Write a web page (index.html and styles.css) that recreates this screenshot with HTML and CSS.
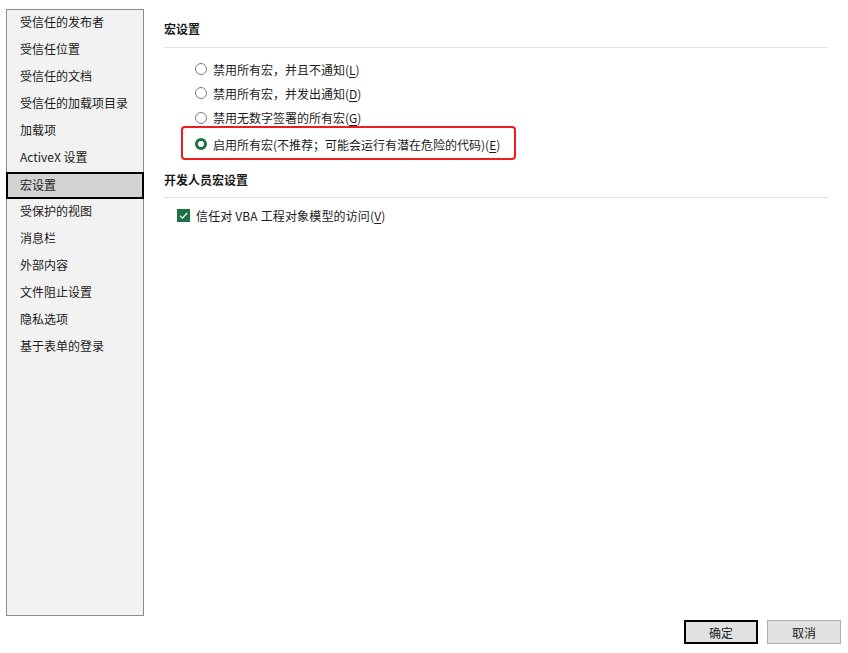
FILE: index.html
```html
<!DOCTYPE html>
<html lang="zh-CN">
<head>
<meta charset="utf-8">
<title>信任中心</title>
<link rel="stylesheet" href="styles.css">
</head>
<body>
<div class="dialog">
  <div class="top">
    <ul class="sidebar">
      <li class="nav-item">受信任的发布者</li>
      <li class="nav-item">受信任位置</li>
      <li class="nav-item">受信任的文档</li>
      <li class="nav-item">受信任的加载项目录</li>
      <li class="nav-item">加载项</li>
      <li class="nav-item">ActiveX 设置</li>
      <li class="nav-item selected">宏设置</li>
      <li class="nav-item">受保护的视图</li>
      <li class="nav-item">消息栏</li>
      <li class="nav-item">外部内容</li>
      <li class="nav-item">文件阻止设置</li>
      <li class="nav-item">隐私选项</li>
      <li class="nav-item">基于表单的登录</li>
    </ul>
    <div class="main">
      <div class="section-title">宏设置</div>
      <div class="options">
        <div class="opt"><span class="radio"></span><span>禁用所有宏，并且不通知(<u>L</u>)</span></div>
        <div class="opt"><span class="radio"></span><span>禁用所有宏，并发出通知(<u>D</u>)</span></div>
        <div class="opt opt-3"><span class="radio"></span><span>禁用无数字签署的所有宏(<u>G</u>)</span></div>
        <div class="opt opt-hl"><span class="radio checked"></span><span>启用所有宏(不推荐；可能会运行有潜在危险的代码)(<u>E</u>)</span></div>
      </div>
      <div class="section-title second">开发人员宏设置</div>
      <div class="check-row">
        <span class="checkbox">
          <svg width="13" height="13" viewBox="0 0 13 13"><path d="M3 6.8 L5.4 9.1 L10.2 4" fill="none" stroke="#ffffff" stroke-width="1.2"/></svg>
        </span>
        <span class="check-label">信任对 VBA 工程对象模型的访问(<u>V</u>)</span>
      </div>
    </div>
  </div>
  <div class="footer">
    <button class="btn primary">确定</button>
    <button class="btn">取消</button>
  </div>
</div>
</body>
</html>
```

FILE: styles.css
```css
html, body {
  margin: 0;
  padding: 0;
  background: #ffffff;
}

body {
  font-family: "Noto Sans CJK SC", "Noto Sans", sans-serif;
  font-size: 12px;
  color: #1b1b1b;
}

.dialog {
  width: 848px;
  height: 653px;
  box-sizing: border-box;
  padding: 9px 7px 0 6px;
  display: flex;
  flex-direction: column;
}

.top {
  display: flex;
  gap: 20px;
  height: 607px;
}

.sidebar {
  list-style: none;
  margin: 0;
  padding: 0;
  width: 138px;
  box-sizing: border-box;
  border: 1px solid #8c8c8c;
  background: #f2f2f2;
  flex: none;
}

.nav-item {
  height: 27px;
  box-sizing: border-box;
  line-height: 24px;
  padding-bottom: 3px;
  padding-left: 13px;
  white-space: nowrap;
}

.nav-item.selected {
  margin: 0 -1px;
  padding-left: 12px;
  padding-bottom: 2px;
  border: 2px solid #000000;
  background: #d3d3d3;
  line-height: 21px;
}

.main {
  flex: 1;
  padding-right: 13px;
}

.section-title {
  font-weight: bold;
  line-height: 20px;
  padding: 10px 0 8px;
  border-bottom: 1px solid #e2e2e2;
}

.section-title.second {
  padding: 14px 0 7px;
}

.options {
  padding-top: 9px;
}

.opt {
  display: flex;
  align-items: center;
  gap: 6px;
  height: 24px;
  padding-left: 31px;
}

.opt-3 {
  height: 25px;
}

.opt-hl {
  position: relative;
  margin-top: 2px;
}

.opt-hl::after {
  content: "";
  position: absolute;
  left: 17px;
  top: -6px;
  width: 335px;
  height: 34px;
  box-sizing: border-box;
  border: 2px solid #ee1c1c;
  border-radius: 4px;
}

.radio {
  width: 12px;
  height: 12px;
  box-sizing: border-box;
  border: 1px solid #7d7d7d;
  border-radius: 50%;
  background: #ffffff;
  flex: none;
}

.radio.checked {
  border: 3.5px solid #1e7145;
}

.check-row {
  display: flex;
  align-items: center;
  gap: 6px;
  height: 24px;
  margin-top: 5px;
  padding-left: 13px;
}

.check-label {
  letter-spacing: 0.15px;
}

.check-row .checkbox {
  width: 13px;
  height: 13px;
  background: #1e7145;
  display: block;
  flex: none;
}

.check-row .checkbox svg {
  display: block;
}

u {
  text-decoration: underline;
  text-underline-offset: 2px;
}

.footer {
  display: flex;
  justify-content: flex-end;
  gap: 9px;
  margin-top: 4px;
}

.btn {
  width: 74px;
  height: 24px;
  box-sizing: border-box;
  border: 1px solid #adadad;
  background: #e1e1e1;
  font-family: "Noto Sans CJK SC", "Noto Sans", sans-serif;
  font-size: 12px;
  color: #1b1b1b;
  padding: 0;
}

.btn.primary {
  border: 2px solid #000000;
}
```
